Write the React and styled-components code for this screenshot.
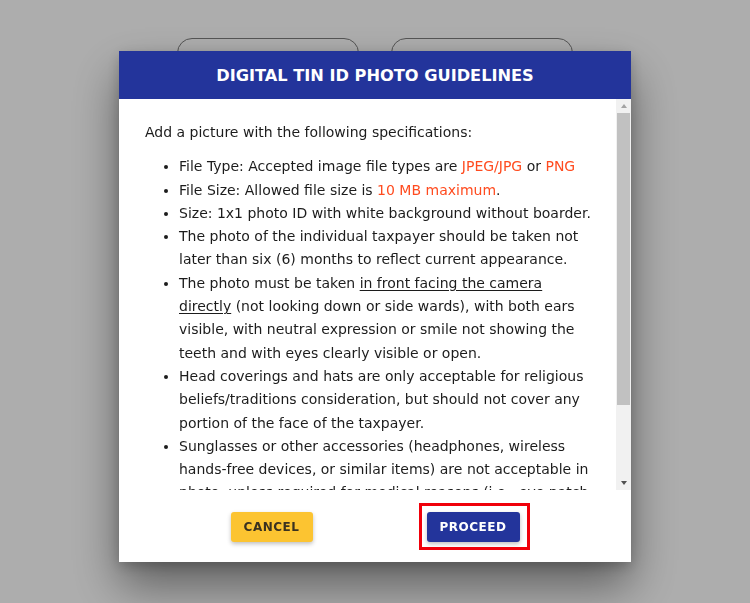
import styled, { createGlobalStyle } from "styled-components";

const GlobalStyle = createGlobalStyle`
  html, body {
    margin: 0;
    padding: 0;
    background: #ffffff;
    font-family: "DejaVu Sans", "Open Sans", sans-serif;
  }
  * {
    box-sizing: border-box;
  }
`;

export default function App() {
  return (
    <>
      <GlobalStyle />
      <Page>
        <TabRow>
          <TabBox />
          <TabBox />
        </TabRow>
      </Page>

      <Overlay>
        <Modal>
          <ModalHeader>
            <h2>DIGITAL TIN ID PHOTO GUIDELINES</h2>
          </ModalHeader>

          <ModalBody>
            <ScrollArea>
              <p>Add a picture with the following specifications:</p>
              <ul>
                <li>
                  File Type: Accepted image file types are{" "}
                  <Highlight>JPEG/JPG</Highlight> or <Highlight>PNG</Highlight>
                </li>
                <li>
                  File Size: Allowed file size is{" "}
                  <Highlight>10 MB maximum</Highlight>.
                </li>
                <li>Size: 1x1 photo ID with white background without boarder.</li>
                <li>
                  The photo of the individual taxpayer should be taken not later
                  than six (6) months to reflect current appearance.
                </li>
                <li>
                  The photo must be taken{" "}
                  <u>in front facing the camera directly</u> (not looking down or
                  side wards), with both ears visible, with neutral expression or
                  smile not showing the teeth and with eyes clearly visible or
                  open.
                </li>
                <li>
                  Head coverings and hats are only acceptable for religious
                  beliefs/traditions consideration, but should not cover any
                  portion of the face of the taxpayer.
                </li>
                <li>
                  Sunglasses or other accessories (headphones, wireless hands-free
                  devices, or similar items) are not acceptable in photo, unless
                  required for medical reasons (i.e., eye patch, etc.).
                </li>
                <li>
                  Photo must be clear, in focus and properly lighted, with no
                  shadows on the face or background.
                </li>
              </ul>
            </ScrollArea>

            {/* scrollbar drawn by hand, the native one is hidden in screenshots */}
            <ScrollRail>
              <RailArrow direction="up" />
              <RailTrack>
                <RailThumb />
              </RailTrack>
              <RailArrow direction="down" />
            </ScrollRail>
          </ModalBody>

          <ModalFooter>
            <Button variant="cancel">CANCEL</Button>
            <Marked>
              <Button variant="proceed">PROCEED</Button>
            </Marked>
          </ModalFooter>
        </Modal>
      </Overlay>
    </>
  );
}

const Page = styled.div`
  min-height: 603px;
  padding-top: 38px;
`;

const TabRow = styled.div`
  display: flex;
  justify-content: center;
  gap: 32px;
`;

const TabBox = styled.div`
  width: 182px;
  height: 52px;
  border: 1.5px solid #7d7d7d;
  border-radius: 15px;
`;

const Overlay = styled.div`
  position: fixed;
  inset: 0;
  background: rgba(0, 0, 0, 0.32);
  display: flex;
  justify-content: center;
  align-items: flex-start;
  padding-top: 51px;
`;

const Modal = styled.div`
  width: 512px;
  height: 511px;
  background: #ffffff;
  display: flex;
  flex-direction: column;
  box-shadow: 0 24px 44px rgba(0, 0, 0, 0.45), 0 4px 12px rgba(0, 0, 0, 0.2);
`;

const ModalHeader = styled.div`
  height: 48px;
  flex-shrink: 0;
  background: #23349b;
  display: flex;
  align-items: center;
  justify-content: center;

  h2 {
    margin: 0;
    color: #ffffff;
    font-size: 16.2px;
    font-weight: 700;
  }
`;

const ModalBody = styled.div`
  flex: 1;
  min-height: 0;
  display: flex;
`;

const ScrollArea = styled.div`
  flex: 1;
  overflow: hidden;
  padding: 22px 20px 0 26px;
  color: #1c1c1c;
  font-size: 14px;
  line-height: 23.3px;

  p {
    margin: 0 0 11px;
  }

  ul {
    margin: 0;
    padding-left: 34px;
  }

  u {
    text-decoration-thickness: 1px;
    text-underline-offset: 2px;
  }
`;

const ScrollRail = styled.div`
  width: 15px;
  flex-shrink: 0;
  background: #f1f1f1;
  display: flex;
  flex-direction: column;
`;

const RailArrow = styled.div`
  height: 14px;
  display: flex;
  align-items: center;
  justify-content: center;

  &::before {
    content: "";
    border-left: 3.5px solid transparent;
    border-right: 3.5px solid transparent;
    ${(props) =>
      props.direction === "up"
        ? "border-bottom: 4px solid #a3a3a3;"
        : "border-top: 4px solid #505050;"}
  }
`;

const RailTrack = styled.div`
  flex: 1;
  padding: 0 1px;
`;

const RailThumb = styled.div`
  height: 292px;
  background: #c1c1c1;
`;

const Highlight = styled.span`
  color: #ff4b1f;
`;

const ModalFooter = styled.div`
  height: 72px;
  flex-shrink: 0;
  display: flex;
  align-items: center;
  justify-content: center;
  gap: 114px;
  padding-top: 2px;
`;

const Marked = styled.div`
  position: relative;

  &::after {
    content: "";
    position: absolute;
    top: -9px;
    bottom: -8px;
    left: -8px;
    right: -10px;
    border: 3px solid #f0000a;
    pointer-events: none;
  }
`;

const Button = styled.button`
  height: 30px;
  border: none;
  border-radius: 3px;
  font-family: inherit;
  font-size: 12px;
  font-weight: 700;
  letter-spacing: 0.5px;
  cursor: pointer;
  padding: 0;
  width: ${(props) => (props.variant === "proceed" ? "93px" : "82px")};
  background: ${(props) => (props.variant === "proceed" ? "#23349b" : "#fcc431")};
  color: ${(props) => (props.variant === "proceed" ? "#ffffff" : "#3a3220")};
  box-shadow: 0 2px 4px rgba(0, 0, 0, 0.25);
`;
